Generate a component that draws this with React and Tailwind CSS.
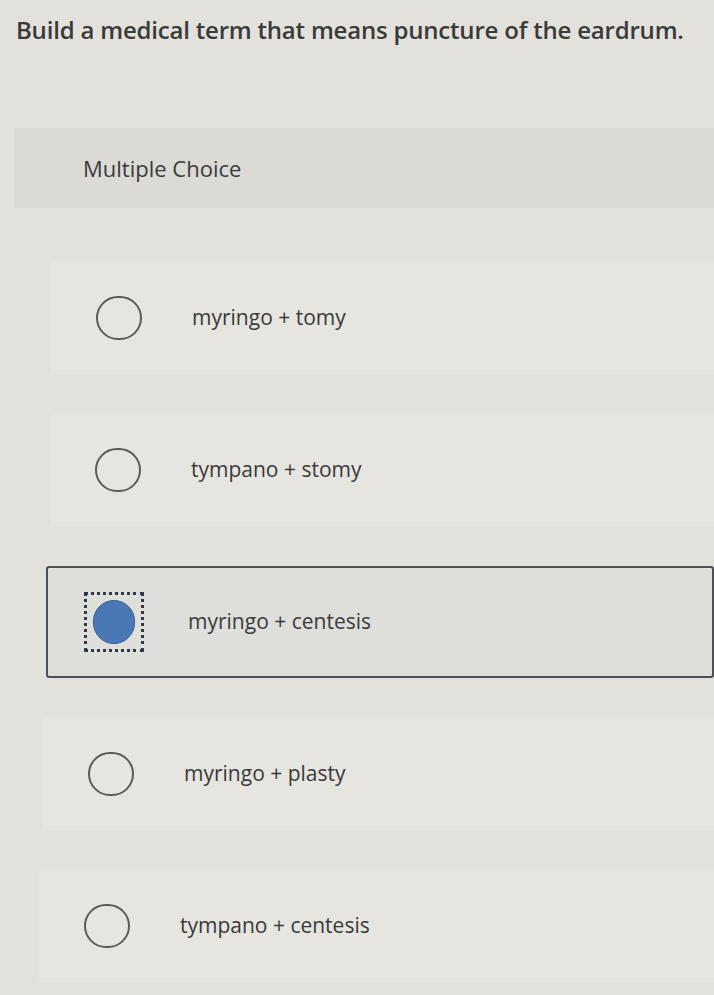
const options = [
  { label: "myringo + tomy", left: "ml-[51px]" },
  { label: "tympano + stomy", left: "ml-[50px]" },
  { label: "myringo + centesis", left: "ml-[46px]", selected: true },
  { label: "myringo + plasty", left: "ml-[43px]" },
  { label: "tympano + centesis", left: "ml-[39px]" },
];

function Radio({ selected }) {
  if (selected) {
    return (
      <div className="w-[60px] h-[60px] border-[3px] border-dotted border-[#2f3a48] flex items-center justify-center shrink-0">
        <div className="w-[42px] h-[44px] rounded-full bg-[#4a78b6] border border-[#3a5f91]" />
      </div>
    );
  }
  return <div className="w-[46px] h-[44px] rounded-full border-2 border-[#5a5a5a] shrink-0" />;
}

export default function App() {
  return (
    <div className="min-h-[995px] w-[714px] bg-[#e3e1dc] font-['Open_Sans',sans-serif] text-[#3a3a3a] overflow-hidden">
      <h1 className="pl-[16px] pt-[12px] text-[24px] font-semibold leading-[36px] tracking-[-0.2px]">
        Build a medical term that means puncture of the eardrum.
      </h1>

      <div className="mt-[80px] ml-[14px] h-[80px] bg-[#dbdad5] flex items-center pl-[69px]">
        <span className="text-[22px] font-medium">Multiple Choice</span>
      </div>

      <div className="mt-[54px] flex flex-col gap-[40px]">
        {options.map((o) => (
          <div
            key={o.label}
            className={`${o.left} h-[112px] flex items-center ${
              o.selected
                ? "bg-[#dedfdb] border-2 border-[#4c5058] rounded-[3px] pl-[36px]"
                : "bg-[#e6e5e0] pl-[45px]"
            }`}
          >
            <Radio selected={o.selected} />
            <span className={`text-[21px] ${o.selected ? "ml-[44px]" : "ml-[50px]"}`}>{o.label}</span>
          </div>
        ))}
      </div>
    </div>
  );
}
